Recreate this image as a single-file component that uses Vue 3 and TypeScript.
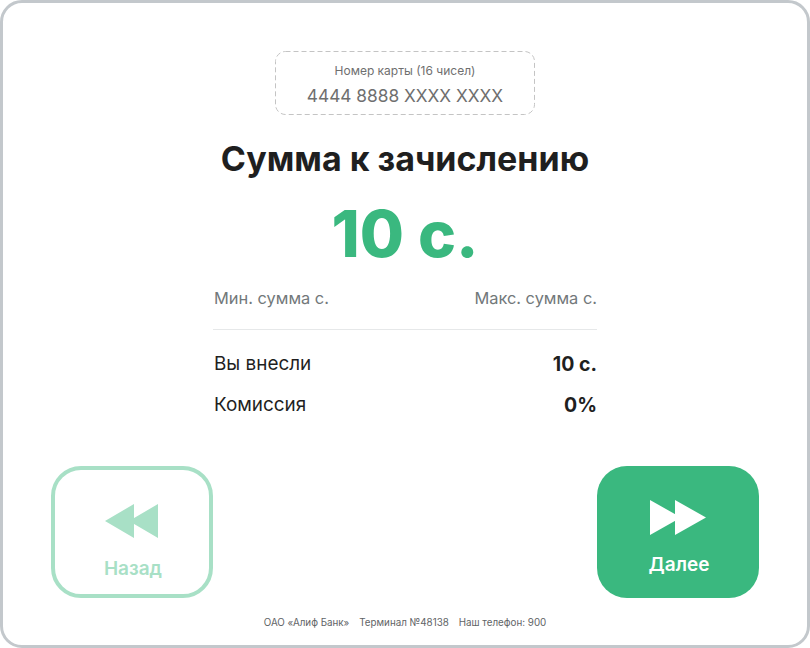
<template>
  <div class="screen">
    <div class="card-box">
      <svg class="card-dash" width="260" height="64">
        <rect x="0.5" y="0.5" width="259" height="63" rx="10" />
      </svg>
      <span class="card-label">Номер карты (16 чисел)</span>
      <span class="card-number">4444 8888 XXXX XXXX</span>
    </div>

    <h1 class="title">Сумма к зачислению</h1>
    <div class="amount">10 с.</div>

    <div class="details">
      <div class="limits">
        <span>Мин. сумма с.</span>
        <span>Макс. сумма с.</span>
      </div>
      <div v-for="row in rows" :key="row.label" class="row">
        <span>{{ row.label }}</span>
        <b>{{ row.value }}</b>
      </div>
    </div>

    <div class="actions">
      <button class="btn btn-back" type="button">
        <svg width="54" height="34" viewBox="0 0 54 34">
          <path d="M0 17 29 0V34Z M24 17 53 0V34Z" fill="#a8e0c6" />
        </svg>
        <span>Назад</span>
      </button>
      <button class="btn btn-next" type="button">
        <svg width="56" height="35" viewBox="0 0 56 35">
          <path d="M0 0 31 17.5 0 35Z M25 0 56 17.5 25 35Z" fill="#fff" />
        </svg>
        <span>Далее</span>
      </button>
    </div>

    <div class="footer">
      <span>ОАО «Алиф Банк»</span>
      <span>Терминал №48138</span>
      <span>Наш телефон: 900</span>
    </div>
  </div>
</template>

<script setup lang="ts">
const rows: { label: string; value: string }[] = [
  { label: "Вы внесли", value: "10 с." },
  { label: "Комиссия", value: "0%" },
];
</script>

<style scoped>
.screen {
  box-sizing: border-box;
  width: 810px;
  height: 648px;
  padding: 48px 48px 0;
  display: flex;
  flex-direction: column;
  align-items: center;
  border: 3px solid #c3c8cc;
  border-radius: 22px;
  background: #fff;
  font-family: Inter, "Noto Sans", sans-serif;
  color: #1f1f1f;
}

.card-box {
  position: relative;
  box-sizing: border-box;
  width: 260px;
  height: 64px;
  padding-top: 12px;
  display: flex;
  flex-direction: column;
  align-items: center;
  gap: 5px;
  color: #6f6f6f;
}

.card-dash {
  position: absolute;
  top: 0;
  left: 0;
}

.card-dash rect {
  fill: none;
  stroke: #c4c4c4;
  stroke-width: 1;
  stroke-dasharray: 5 3;
}

.card-label {
  font-size: 12px;
  line-height: 16px;
}

.card-number {
  font-size: 17.3px;
  line-height: 24px;
}

.title {
  margin: 22px 0 0;
  font-size: 34px;
  line-height: 44px;
  font-weight: 700;
}

.amount {
  margin-top: 15px;
  font-size: 64px;
  line-height: 76px;
  font-weight: 800;
  color: #3ab87f;
}

.details {
  width: 384px;
  margin-top: 15px;
}

.limits {
  display: flex;
  justify-content: space-between;
  padding: 0 0 20px 1px;
  margin-bottom: 22px;
  border-bottom: 1px solid #e6e8e9;
  font-size: 16.4px;
  line-height: 22px;
  color: #72787a;
}

.row {
  display: flex;
  justify-content: space-between;
  padding-left: 1px;
  font-size: 18.9px;
  line-height: 24px;
  margin-bottom: 17px;
}

.row b {
  font-size: 19.5px;
  font-weight: 700;
}

.actions {
  align-self: stretch;
  display: flex;
  justify-content: space-between;
  margin-top: 32px;
}

.btn {
  box-sizing: border-box;
  width: 162px;
  height: 132px;
  display: flex;
  flex-direction: column;
  align-items: center;
  padding: 0;
  border-radius: 30px;
  font-family: inherit;
  font-size: 19px;
  line-height: 24px;
  font-weight: 600;
}

.btn span {
  margin-left: 2px;
}

.btn-back {
  padding-top: 34px;
  gap: 19px;
  border: 4px solid #a8e0c6;
  background: #fff;
  color: #a8e0c6;
}

.btn-next {
  padding-top: 34px;
  gap: 18px;
  border: 0;
  background: #3ab87f;
  color: #fff;
}

.footer {
  margin-top: 18px;
  display: flex;
  gap: 10px;
  font-size: 9.8px;
  line-height: 14px;
  color: #5f6466;
}
</style>
